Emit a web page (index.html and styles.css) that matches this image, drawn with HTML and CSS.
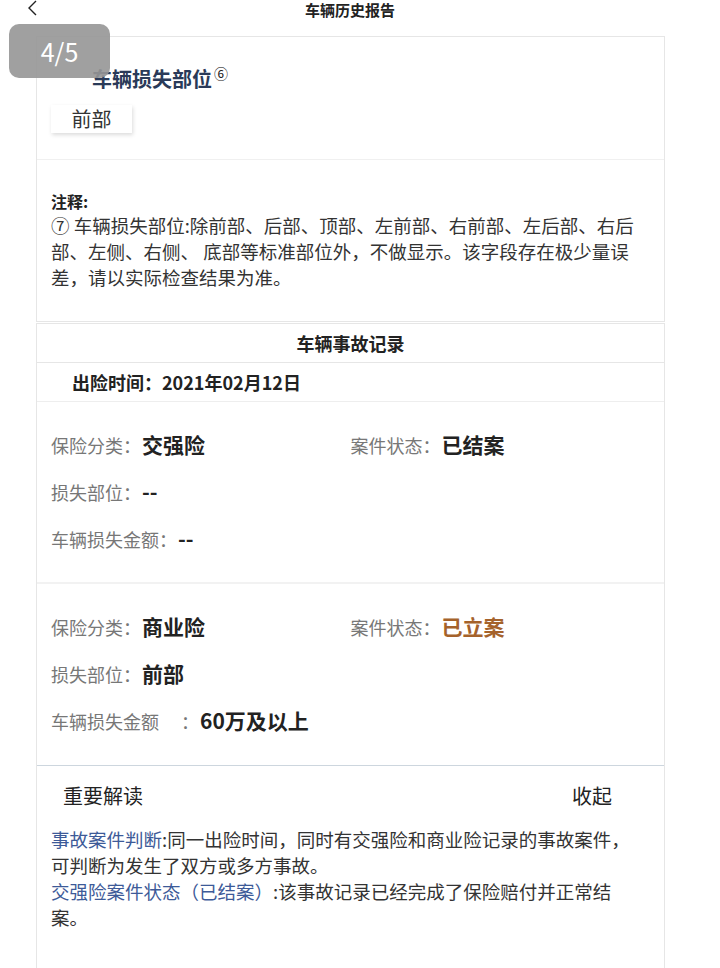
FILE: index.html
```html
<!DOCTYPE html>
<html lang="zh-CN">
<head>
  <meta charset="UTF-8">
  <meta name="viewport" content="width=device-width, initial-scale=1.0">
  <title>车辆历史报告</title>
  <link rel="stylesheet" href="styles.css">
</head>
<body>

  <header class="topbar">
    <span class="back">
      <svg width="12" height="16" viewBox="0 0 12 16"><polyline points="9,1 2,8 9,15" fill="none" stroke="#222" stroke-width="1.4"/></svg>
    </span>
    <h1>车辆历史报告</h1>
  </header>

  <div class="page-badge">4/5</div>

  <div class="card">
    <div class="damage">
      <h2>车辆损失部位<sup>⑥</sup></h2>
      <span class="tag">前部</span>
    </div>
    <div class="notes">
      <h3>注释:</h3>
      <p>⑦ 车辆损失部位:除前部、后部、顶部、左前部、右前部、左后部、右后部、左侧、右侧、 底部等标准部位外，不做显示。该字段存在极少量误差，请以实际检查结果为准。</p>
    </div>
  </div>

  <div class="card accidents">
    <div class="card-title">车辆事故记录</div>
    <div class="date">出险时间：2021年02月12日</div>

    <div class="record">
      <div class="row">
        <div class="cell"><span class="label">保险分类：</span><span class="value">交强险</span></div>
        <div class="cell"><span class="label">案件状态：</span><span class="value">已结案</span></div>
      </div>
      <div class="row">
        <div class="cell"><span class="label">损失部位：</span><span class="value">--</span></div>
      </div>
      <div class="row">
        <div class="cell"><span class="label">车辆损失金额：</span><span class="value">--</span></div>
      </div>
    </div>

    <div class="record last">
      <div class="row">
        <div class="cell"><span class="label">保险分类：</span><span class="value">商业险</span></div>
        <div class="cell"><span class="label">案件状态：</span><span class="value pending">已立案</span></div>
      </div>
      <div class="row">
        <div class="cell"><span class="label">损失部位：</span><span class="value">前部</span></div>
      </div>
      <div class="row">
        <div class="cell"><span class="label">车辆损失金额<span class="gap"></span>：</span><span class="value">60万及以上</span></div>
      </div>
    </div>

    <div class="explain">
      <div class="explain-head">
        <span>重要解读</span>
        <span>收起</span>
      </div>
      <p><span class="hl">事故案件判断</span>:同一出险时间，同时有交强险和商业险记录的事故案件，可判断为发生了双方或多方事故。<br>
      <span class="hl">交强险案件状态（已结案）</span>:该事故记录已经完成了保险赔付并正常结案。</p>
    </div>
  </div>

</body>
</html>
```

FILE: styles.css
```css
body {
  margin: 0;
  font-family: "Noto Sans CJK SC", "Noto Sans", sans-serif;
  color: #222;
  background: #fff;
  width: 720px;
}
.topbar {
  height: 36px;
  display: flex;
  align-items: flex-start;
  position: relative;
}
.topbar .back {
  margin-left: 27px;
  line-height: 0;
}
.topbar h1 {
  flex: 1;
  margin: 0 0 0 -39px;
  padding-right: 20px;
  font-size: 15px;
  line-height: 20px;
  text-align: center;
  font-weight: bold;
}
.page-badge {
  position: absolute;
  top: 24px;
  left: 9px;
  width: 101px;
  height: 54px;
  border-radius: 10px;
  background: rgba(150, 150, 150, 0.9);
  color: #fff;
  font-size: 25px;
  line-height: 54px;
  text-align: center;
}
.card {
  margin-left: 36px;
  width: 627px;
  border: 1px solid #e6e6e6;
}
.damage {
  padding: 24px 14px 26px;
  border-bottom: 1px solid #f0f0f0;
}
.damage h2 {
  margin: 0 0 14px 41px;
  font-size: 20px;
  line-height: 24px;
  color: #2a3a58;
}
.damage sup {
  font-size: 14px;
  font-weight: normal;
  color: #222;
  vertical-align: 8px;
  margin-left: 2px;
}
.tag {
  display: inline-block;
  width: 81px;
  height: 28px;
  line-height: 28px;
  text-align: center;
  font-size: 20px;
  color: #333;
  box-shadow: 1px 2px 4px rgba(0, 0, 0, 0.14);
}
.notes {
  padding: 30px 24px 31px 14px;
}
.notes h3 {
  margin: 0;
  font-size: 16px;
  line-height: 22px;
}
.notes p {
  margin: 0;
  font-size: 18.5px;
  line-height: 26px;
  color: #333;
}
.accidents {
  margin-top: 1px;
}
.card-title {
  height: 38px;
  line-height: 38px;
  text-align: center;
  font-weight: bold;
  font-size: 18px;
  border-bottom: 1px solid #e6e6e6;
}
.date {
  height: 38px;
  line-height: 38px;
  padding-left: 35px;
  font-weight: bold;
  font-size: 18px;
  border-bottom: 1px solid #eeeeee;
}
.record {
  padding: 18px 14px 21px;
  border-bottom: 2px solid #f2f2f2;
}
.record.last {
  padding-bottom: 22px;
  border-bottom: 1px solid #cdd6de;
}
.row {
  height: 47px;
  display: flex;
  align-items: center;
}
.cell {
  width: 300px;
  display: flex;
  align-items: baseline;
}
.label {
  font-size: 18px;
  color: #777;
}
.label .gap {
  display: inline-block;
  width: 22px;
}
.value {
  margin-left: 1px;
  font-size: 21px;
  font-weight: bold;
  color: #222;
}
.value.pending {
  color: #a5622b;
}
.explain {
  padding: 16px 30px 60px 14px;
}
.explain-head {
  display: flex;
  justify-content: space-between;
  padding: 0 22px 0 12px;
  font-size: 20px;
  line-height: 28px;
  margin-bottom: 16px;
}
.explain p {
  margin: 0;
  font-size: 18.5px;
  line-height: 26px;
  color: #333;
}
.explain .hl {
  color: #3d5a98;
}
```
